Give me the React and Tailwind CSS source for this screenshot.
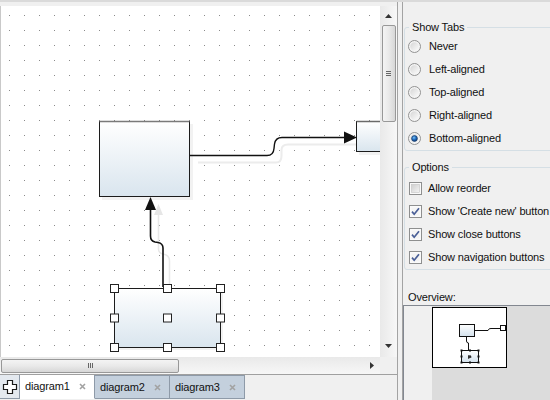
import React from "react";

const font = { fontFamily: '"Liberation Sans", Arial, sans-serif' };

const Radio = ({ checked }) => (
  <svg width="13" height="13" viewBox="0 0 13 13" className="shrink-0">
    <defs>
      <linearGradient id={checked ? "rgOn" : "rgOff"} x1="0" y1="0" x2="1" y2="1">
        <stop offset="0" stopColor="#d6d6d6" />
        <stop offset="1" stopColor="#fbfbfb" />
      </linearGradient>
      <radialGradient id="rgDot" cx="0.4" cy="0.35" r="0.7">
        <stop offset="0" stopColor="#7cc4f8" />
        <stop offset="0.5" stopColor="#1f6cc0" />
        <stop offset="1" stopColor="#0f3568" />
      </radialGradient>
    </defs>
    <circle cx="6.5" cy="6.5" r="6" fill="#f4f4f4" stroke="#929292" />
    <circle cx="6.5" cy="6.5" r="4.2" fill={checked ? "url(#rgOn)" : "url(#rgOff)"} />
    {checked && <circle cx="6.5" cy="6.5" r="2.9" fill="url(#rgDot)" stroke="#1b3f6e" strokeWidth="0.7" />}
  </svg>
);

const Check = ({ checked }) => (
  <svg width="13" height="13" viewBox="0 0 13 13" className="shrink-0">
    <defs>
      <linearGradient id="cbIn" x1="0" y1="0" x2="1" y2="1">
        <stop offset="0" stopColor="#cfcfcf" />
        <stop offset="1" stopColor="#f4f4f4" />
      </linearGradient>
    </defs>
    <rect x="0.5" y="0.5" width="12" height="12" fill="#fafafa" stroke="#8e8f8f" />
    <rect x="2.5" y="2.5" width="8" height="8" fill={checked ? "#f4f4f4" : "url(#cbIn)"} stroke={checked ? "none" : "#c4c4c4"} strokeWidth="0.6" />
    {checked && <path d="M3 6.6 L5.2 9.2 L10 3.2" fill="none" stroke="#4a5f97" strokeWidth="1.7" />}
  </svg>
);

const Diagram = () => (
  <svg width="379" height="351" viewBox="1 6 379 351" className="block">
    <defs>
      <pattern id="dots" x="9" y="15" width="15" height="15" patternUnits="userSpaceOnUse">
        <rect x="0" y="0" width="1" height="1" fill="#8a8a8a" />
      </pattern>
      <linearGradient id="node" x1="0" y1="0" x2="0" y2="1">
        <stop offset="0" stopColor="#ffffff" />
        <stop offset="1" stopColor="#d9e5ee" />
      </linearGradient>
    </defs>
    <rect x="1" y="6" width="379" height="351" fill="#ffffff" />
    <rect x="1" y="6" width="379" height="351" fill="url(#dots)" />

    {/* ghost links */}
    <path d="M198 162.5 H276 Q281.5 162.5 281.5 156 V150 Q281.5 144.5 288 144.5 H357" fill="none" stroke="#ececec" strokeWidth="2" />
    <path d="M158.5 214 V249 Q158.5 253 163 254 Q169.5 255 169.5 261 V287" fill="none" stroke="#e8e8e8" strokeWidth="1.5" />
    <polygon points="154,215 158.5,204 163,215" fill="#e6e6e6" />

    {/* shadows */}
    <rect x="102" y="124" width="91" height="76" fill="#000" opacity="0.05" />
    <rect x="117" y="291" width="106" height="59" fill="#000" opacity="0.05" />
    <rect x="359" y="124" width="30" height="31" fill="#000" opacity="0.05" />

    {/* nodes */}
    <rect x="99.5" y="121.5" width="90" height="75" fill="url(#node)" stroke="#1c1c1c" />
    <line x1="99.5" y1="121.5" x2="189.5" y2="121.5" stroke="#7a7a7a" strokeWidth="1.5" />
    <rect x="356.5" y="121.5" width="30" height="30" fill="url(#node)" stroke="#1c1c1c" />
    <line x1="356.5" y1="121.5" x2="386.5" y2="121.5" stroke="#6a6a6a" strokeWidth="1.5" />
    <rect x="114.5" y="288.5" width="106" height="59" fill="url(#node)" stroke="#1c1c1c" />

    {/* links */}
    <path d="M190 155.5 H267 Q273.5 155.5 274 148.5 L274.5 144 Q275.5 137.5 282 137.5 H346" fill="none" stroke="#111" strokeWidth="1.4" />
    <polygon points="344,131.5 357,137.5 344,143.5" fill="#111" />
    <path d="M163 287 V248 Q163 243.5 158 242.5 L155 242 Q150.5 241 150.5 236 V208" fill="none" stroke="#111" strokeWidth="1.6" />
    <polygon points="145,210 150.5,197 156,210" fill="#111" />

    {/* selection handles */}
    {[114.5, 167.5, 220.5].map((x) =>
      [288.5, 318, 347.5].map((y) => (
        <rect key={x + "-" + y} x={x - 4} y={y - 4} width="8" height="8" fill="#fff" stroke="#222" />
      ))
    )}
  </svg>
);

const Overview = () => (
  <svg width="75" height="61" viewBox="0 0 75 61" className="block">
    <defs>
      <linearGradient id="mini" x1="0" y1="0" x2="0" y2="1">
        <stop offset="0" stopColor="#ffffff" />
        <stop offset="1" stopColor="#d3e1ec" />
      </linearGradient>
    </defs>
    <rect x="0.5" y="0.5" width="74" height="60" fill="#fff" stroke="#000" />
    <rect x="27.5" y="17.5" width="15" height="12" fill="url(#mini)" stroke="#111" />
    <path d="M43 23.5 H56 Q57 21 59 21.5 H68" fill="none" stroke="#111" strokeWidth="1" />
    <rect x="68.5" y="18.5" width="5" height="5" fill="#fff" stroke="#111" />
    <path d="M34.5 30 V34 Q34.5 36 36.5 36 V43" fill="none" stroke="#111" strokeWidth="1" />
    <rect x="29.5" y="43.5" width="17" height="12" fill="url(#mini)" stroke="#111" />
    {[29.5, 38, 46.5].map((x) =>
      [43.5, 49.5, 55.5].map((y) => (
        <rect key={x + "-" + y} x={x - 1} y={y - 1} width="2" height="2" fill="#111" />
      ))
    )}
    <polygon points="36,48 40,50 36,52" fill="#333" />
  </svg>
);

const TabClose = () => (
  <svg width="7" height="7" viewBox="0 0 7 7" className="shrink-0">
    <path d="M1 1 L6 6 M6 1 L1 6" stroke="#a2a2a2" strokeWidth="1.6" />
  </svg>
);

const Tab = ({ label, active }) => (
  <div
    className={
      "w-[75px] h-[24px] flex items-center pl-[5px] pr-[8px] justify-between border-r border-b border-[#8e9aa8] " +
      (active ? "bg-white border-b-white" : "bg-[#c4d0dd] border-t")
    }
  >
    <span className="text-[#111]">{label}</span>
    <TabClose />
  </div>
);

export default function App() {
  const radios = ["Never", "Left-aligned", "Top-aligned", "Right-aligned", "Bottom-aligned"];
  const checks = [
    ["Allow reorder", false],
    ["Show 'Create new' button", true],
    ["Show close buttons", true],
    ["Show navigation buttons", true],
  ];

  return (
    <div
      className="w-[550px] h-[400px] flex bg-[#f0f0f0] text-[11px] tracking-[-0.15px] text-[#111] overflow-hidden border-t-2 border-[#dadada]"
      style={font}
    >
      {/* diagram column */}
      <div className="w-[397px] flex flex-col">
        <div className="h-[4px] bg-[#f0f0f0]" />
        <div className="flex h-[351px]">
          <div className="w-[380px] border-l border-[#c9c9c9] overflow-hidden">
            <Diagram />
          </div>
          {/* vertical scrollbar */}
          <div className="w-[17px] flex flex-col items-center bg-gradient-to-r from-[#e9e9e9] to-[#f7f7f7]">
            <div className="h-[19px] flex items-center justify-center">
              <svg width="7" height="4" viewBox="0 0 7 4"><polygon points="0,4 3.5,0 7,4" fill="#333" /></svg>
            </div>
            <div className="w-[14px] h-[97px] rounded-[2px] border border-[#989898] bg-gradient-to-r from-[#f4f4f4] via-[#e9e9e9] to-[#d7d7d7] flex flex-col items-center justify-center gap-[1px]">
              <div className="w-[5px] h-px bg-[#666]" />
              <div className="w-[5px] h-px bg-[#666]" />
              <div className="w-[5px] h-px bg-[#666]" />
            </div>
            <div className="flex-1" />
            <div className="h-[22px] flex items-center justify-center">
              <svg width="7" height="4" viewBox="0 0 7 4"><polygon points="0,0 3.5,4 7,0" fill="#333" /></svg>
            </div>
          </div>
        </div>
        {/* horizontal scrollbar */}
        <div className="flex h-[17px]">
          <div className="w-[380px] flex items-center bg-gradient-to-b from-[#e9e9e9] to-[#f7f7f7]">
            <div className="w-[178px] h-[14px] ml-px rounded-[2px] border border-[#989898] bg-gradient-to-b from-[#f4f4f4] via-[#e9e9e9] to-[#d7d7d7] flex items-center justify-center gap-[1px]">
              <div className="w-px h-[5px] bg-[#666]" />
              <div className="w-px h-[5px] bg-[#666]" />
              <div className="w-px h-[5px] bg-[#666]" />
            </div>
            <div className="flex-1" />
            <div className="w-[16px] flex items-center justify-center">
              <svg width="4" height="7" viewBox="0 0 4 7"><polygon points="0,0 4,3.5 0,7" fill="#333" /></svg>
            </div>
          </div>
          <div className="w-[17px] bg-[#f0f0f0]" />
        </div>
        {/* tab strip */}
        <div className="flex-1 flex items-start border-t border-[#a0a0a0]">
          <div className="w-[20px] h-[24px] flex items-center justify-center border-r border-b border-[#8e9aa8] bg-[#e4e9ef]">
            <svg width="16" height="16" viewBox="0 0 16 16">
              <path d="M5.5 1.5 H10.5 V5.5 H14.5 V10.5 H10.5 V14.5 H5.5 V10.5 H1.5 V5.5 H5.5 Z" fill="#fff" stroke="#1a1a1a" strokeWidth="1.2" />
            </svg>
          </div>
          <Tab label="diagram1" active />
          <Tab label="diagram2" />
          <Tab label="diagram3" />
        </div>
      </div>

      {/* splitter */}
      <div className="w-[6px] border-l border-r border-[#a3a3a3] bg-[#f0f0f0]" />

      {/* options panel */}
      <div className="flex-1 min-w-0 overflow-hidden flex flex-col pt-[18px]">
        <fieldset className="w-[170px] ml-px border border-[#d5dfe5] rounded-[3px] pt-[1px]">
          <legend className="ml-[4px] px-[3px] leading-[14px]">Show Tabs</legend>
          {radios.map((r) => (
            <div key={r} className="h-[23px] flex items-center gap-[8px] pl-[3px]">
              <Radio checked={r === "Bottom-aligned"} />
              <span className="whitespace-nowrap">{r}</span>
            </div>
          ))}
        </fieldset>

        <fieldset className="w-[170px] ml-px mt-[9px] border border-[#d5dfe5] rounded-[3px] pt-[3px]">
          <legend className="ml-[4px] px-[3px] leading-[14px]">Options</legend>
          {checks.map(([c, on]) => (
            <div key={c} className="h-[23px] flex items-center gap-[6px] pl-[4px]">
              <Check checked={on} />
              <span className="whitespace-nowrap">{c}</span>
            </div>
          ))}
        </fieldset>

        <div className="mt-[20px] pl-[5px] leading-[14px]">Overview:</div>
        <div className="mt-[1px] flex-1 flex border-l border-t border-[#828790]">
          <div className="w-[28px] bg-[#f0f0f0]" />
          <div className="flex-1 bg-[#dcdcdc] pt-[1px]">
            <Overview />
          </div>
        </div>
      </div>
    </div>
  );
}
